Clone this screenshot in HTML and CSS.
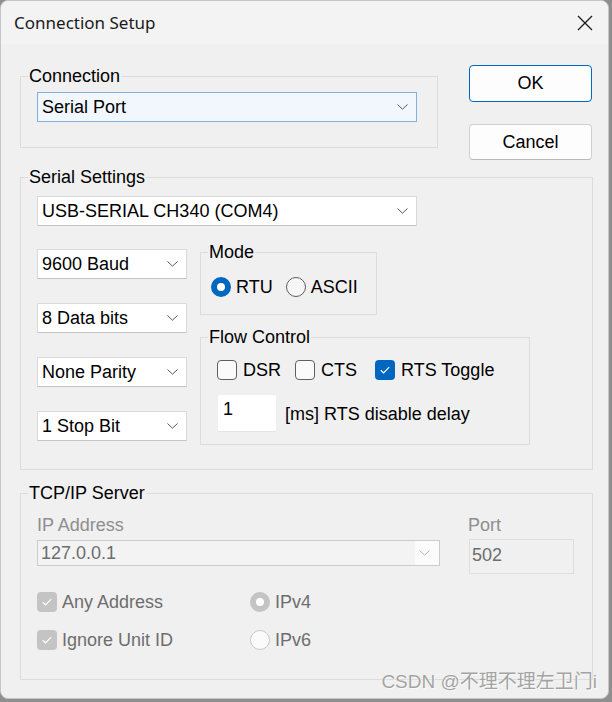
FILE: index.html
```html
<!DOCTYPE html>
<html>
  <head>
    <meta charset="UTF-8">
    <title>Connection Setup</title>
    <link rel="stylesheet" href="styles.css">
  </head>
  <body>
    <div class="window">
      <div class="titlebar">
        <span class="title">Connection Setup</span>
        <svg class="close" width="16" height="16" viewBox="0 0 16 16">
          <path d="M1 1 L15 15 M15 1 L1 15" stroke="#1b1b1b" stroke-width="1.3" fill="none"/>
        </svg>
      </div>

      <div class="content">
        <div class="top-row">
          <fieldset class="group group-connection">
            <legend>Connection</legend>
            <div class="connection-body">
              <div class="combo combo-focus">
                <span>Serial Port</span>
                <svg class="chevron" width="11" height="6" viewBox="0 0 11 6"><path d="M0.5 0.5 L5.5 5.2 L10.5 0.5" stroke="#5a5a5a" stroke-width="1" fill="none"/></svg>
              </div>
            </div>
          </fieldset>
          <div class="buttons">
            <button class="btn btn-default">OK</button>
            <button class="btn">Cancel</button>
          </div>
        </div>

        <fieldset class="group group-serial">
          <legend>Serial Settings</legend>
          <div class="serial-body">
            <div class="combo combo-port">
              <span>USB-SERIAL CH340 (COM4)</span>
              <svg class="chevron" width="11" height="6" viewBox="0 0 11 6"><path d="M0.5 0.5 L5.5 5.2 L10.5 0.5" stroke="#5a5a5a" stroke-width="1" fill="none"/></svg>
            </div>
            <div class="serial-grid">
              <div class="serial-left">
                <div class="combo combo-small">
                  <span>9600 Baud</span>
                  <svg class="chevron" width="11" height="6" viewBox="0 0 11 6"><path d="M0.5 0.5 L5.5 5.2 L10.5 0.5" stroke="#5a5a5a" stroke-width="1" fill="none"/></svg>
                </div>
                <div class="combo combo-small">
                  <span>8 Data bits</span>
                  <svg class="chevron" width="11" height="6" viewBox="0 0 11 6"><path d="M0.5 0.5 L5.5 5.2 L10.5 0.5" stroke="#5a5a5a" stroke-width="1" fill="none"/></svg>
                </div>
                <div class="combo combo-small">
                  <span>None Parity</span>
                  <svg class="chevron" width="11" height="6" viewBox="0 0 11 6"><path d="M0.5 0.5 L5.5 5.2 L10.5 0.5" stroke="#5a5a5a" stroke-width="1" fill="none"/></svg>
                </div>
                <div class="combo combo-small">
                  <span>1 Stop Bit</span>
                  <svg class="chevron" width="11" height="6" viewBox="0 0 11 6"><path d="M0.5 0.5 L5.5 5.2 L10.5 0.5" stroke="#5a5a5a" stroke-width="1" fill="none"/></svg>
                </div>
              </div>

              <div class="serial-right">
                <fieldset class="group group-mode">
                  <legend>Mode</legend>
                  <div class="mode-body">
                    <label class="option">
                      <span class="radio radio-on"></span>RTU
                    </label>
                    <label class="option option-ascii">
                      <span class="radio"></span>ASCII
                    </label>
                  </div>
                </fieldset>

                <fieldset class="group group-flow">
                  <legend>Flow Control</legend>
                  <div class="flow-body">
                    <div class="flow-checks">
                      <label class="option"><span class="check"></span>DSR</label>
                      <label class="option"><span class="check"></span>CTS</label>
                      <label class="option">
                        <span class="check check-on">
                          <svg width="20" height="20" viewBox="0 0 20 20"><path d="M5.8 10.3 L8.6 13 L14.2 7.2" stroke="#fff" stroke-width="1.2" fill="none"/></svg>
                        </span>RTS Toggle
                      </label>
                    </div>
                    <div class="delay-row">
                      <div class="textbox">1</div>
                      <span>[ms] RTS disable delay</span>
                    </div>
                  </div>
                </fieldset>
              </div>
            </div>
          </div>
        </fieldset>

        <fieldset class="group group-tcp">
          <legend>TCP/IP Server</legend>
          <div class="tcp-body">
            <div class="tcp-top">
              <div class="tcp-ip">
                <div class="field-label">IP Address</div>
                <div class="combo combo-disabled">
                  <span class="combo-text">127.0.0.1</span>
                  <svg class="chevron" width="11" height="6" viewBox="0 0 11 6"><path d="M0.5 0.5 L5.5 5.2 L10.5 0.5" stroke="#b5b5b5" stroke-width="1" fill="none"/></svg>
                </div>
              </div>
              <div class="tcp-port">
                <div class="field-label">Port</div>
                <div class="port-box">502</div>
              </div>
            </div>
            <div class="tcp-options">
              <label class="option option-disabled">
                <span class="check check-disabled">
                  <svg width="20" height="20" viewBox="0 0 20 20"><path d="M5.8 10.3 L8.6 13 L14.2 7.2" stroke="#fff" stroke-width="1.2" fill="none"/></svg>
                </span>Any Address
              </label>
              <label class="option option-disabled">
                <span class="radio radio-disabled-on"></span>IPv4
              </label>
              <label class="option option-disabled">
                <span class="check check-disabled">
                  <svg width="20" height="20" viewBox="0 0 20 20"><path d="M5.8 10.3 L8.6 13 L14.2 7.2" stroke="#fff" stroke-width="1.2" fill="none"/></svg>
                </span>Ignore Unit ID
              </label>
              <label class="option option-disabled">
                <span class="radio radio-disabled"></span>IPv6
              </label>
            </div>
          </div>
        </fieldset>
      </div>

      <div class="watermark">CSDN @不理不理左卫门i</div>
    </div>
  </body>
</html>
```

FILE: styles.css
```css
body {
  margin: 0;
  background-color: #8f8f8f;
  font-family: "Liberation Sans", Arial, sans-serif;
  font-size: 18px;
  line-height: 20px;
  color: #000000;
}

.window {
  position: relative;
  box-sizing: border-box;
  width: 609px;
  height: 699px;
  background-color: #F0F0F0;
  border: 1px solid #c6c6c6;
  border-radius: 8px;
  overflow: hidden;
}

.titlebar {
  height: 43px;
  display: flex;
  align-items: center;
  justify-content: space-between;
  padding: 0 15px 0 13px;
  background-color: #F3F3F3;
}

.title {
  font-family: "Noto Sans", sans-serif;
  font-size: 17px;
  line-height: 23px;
  color: #1a1a1a;
}

.content {
  padding: 0 15px 0 19px;
}

/* group boxes */

.group {
  margin: 0;
  padding: 0;
  min-width: 0;
  border: 1px solid #dcdcdc;
}

.group legend {
  margin-left: 7px;
  padding: 0 1px;
  line-height: 20px;
}

.top-row {
  display: flex;
  align-items: flex-start;
  padding-top: 21px;
}

.group-connection {
  width: 418px;
  box-sizing: border-box;
  margin-top: 1px;
}

.connection-body {
  padding: 6px 20px 25px 16px;
}

.buttons {
  margin-left: auto;
  margin-right: 1px;
  display: flex;
  flex-direction: column;
  gap: 22px;
}

.btn {
  width: 123px;
  height: 36px;
  font-family: "Liberation Sans", Arial, sans-serif;
  font-size: 18px;
  color: #000000;
  background-color: #FDFDFD;
  border: 1px solid #d0d0d0;
  border-bottom-color: #b8b8b8;
  border-radius: 4px;
  padding: 0;
}

.btn-default {
  height: 37px;
  border: 1px solid #0067C0;
}

/* combos */

.combo {
  box-sizing: border-box;
  height: 30px;
  display: flex;
  align-items: center;
  justify-content: space-between;
  padding: 0 8px 0 4px;
  background-color: #FFFFFF;
  border: 1px solid #dadada;
  border-bottom-color: #c4c4c4;
}

.combo-focus {
  background-color: #F1F7FC;
  border-color: #7FB0DE;
}

.combo-port {
  width: 380px;
}

.combo-small {
  width: 150px;
}

.combo-disabled {
  height: 26px;
  padding: 0 9px 0 0;
  background-color: #FBFBFB;
  border-color: #cccccc;
}

.combo-disabled .combo-text {
  align-self: stretch;
  display: flex;
  align-items: center;
  width: 374px;
  padding-left: 3px;
  background-color: #F3F3F3;
  color: #6d6d6d;
}

/* serial settings */

.group-serial {
  margin-top: 7px;
}

.serial-body {
  padding: 9px 0 24px 16px;
}

.serial-grid {
  display: grid;
  grid-template-columns: 150px 330px;
  column-gap: 13px;
  margin-top: 16px;
}

.serial-left {
  display: flex;
  flex-direction: column;
  gap: 24px;
  padding-top: 7px;
}

.serial-right {
  display: flex;
  flex-direction: column;
  gap: 12px;
}

.group-mode {
  width: 177px;
  box-sizing: border-box;
}

.mode-body {
  display: flex;
  padding: 15px 0 17px 10px;
}

.option {
  display: flex;
  align-items: center;
  gap: 5px;
  height: 20px;
  white-space: nowrap;
}

.option-ascii {
  margin-left: 13px;
}

.radio {
  box-sizing: border-box;
  width: 20px;
  height: 20px;
  border-radius: 50%;
  border: 1px solid #5e5e5e;
  background-color: #F6F6F6;
}

.radio-on {
  border: 6px solid #0067C0;
  background-color: #FFFFFF;
}

.check {
  box-sizing: border-box;
  width: 20px;
  height: 20px;
  border-radius: 4px;
  border: 1px solid #5f5f5f;
  background-color: #FAFAFA;
}

.check svg {
  display: block;
}

.check-on {
  border: none;
  background-color: #0067C0;
}

.group-flow {
  width: 330px;
  box-sizing: border-box;
}

.flow-body {
  padding: 13px 0 12px 16px;
}

.flow-checks {
  display: grid;
  grid-template-columns: 78px 80px auto;
}

.flow-checks .option {
  gap: 6px;
}

.delay-row {
  display: flex;
  align-items: center;
  gap: 9px;
  margin-top: 15px;
  margin-left: 1px;
}

.textbox {
  box-sizing: border-box;
  width: 58px;
  height: 37px;
  padding: 4px 0 0 5px;
  background-color: #FFFFFF;
  border-bottom: 1px solid #e4e4e4;
}

/* tcp/ip server */

.group-tcp {
  margin-top: 13px;
}

.tcp-body {
  padding: 12px 18px 29px 16px;
  color: #6d6d6d;
}

.tcp-top {
  display: flex;
  gap: 28px;
}

.tcp-ip {
  width: 403px;
}

.tcp-ip .combo {
  margin-top: 5px;
}

.field-label {
  color: #8e8e8e;
}

.port-box {
  box-sizing: border-box;
  width: 105px;
  height: 35px;
  margin-top: 4px;
  margin-left: 1px;
  padding: 5px 0 0 2px;
  border: 1px solid #dedede;
}

.tcp-options {
  display: grid;
  grid-template-columns: 213px auto;
  row-gap: 18px;
  margin-top: 18px;
}

.check-disabled {
  border: none;
  background-color: #C4C4C4;
}

.radio-disabled-on {
  border: 6px solid #C4C4C4;
  background-color: #FFFFFF;
}

.radio-disabled {
  border-color: #c8c8c8;
  background-color: #FBFBFB;
}

/* overlay */

.watermark {
  position: absolute;
  right: 11px;
  bottom: 5px;
  font-family: "Liberation Sans", "Noto Sans CJK SC", sans-serif;
  font-size: 19px;
  line-height: 22px;
  color: #a3a3a3;
  text-shadow: 0 0 1px #ffffff, 1px 1px 0 rgba(255, 255, 255, 0.6);
}
```
